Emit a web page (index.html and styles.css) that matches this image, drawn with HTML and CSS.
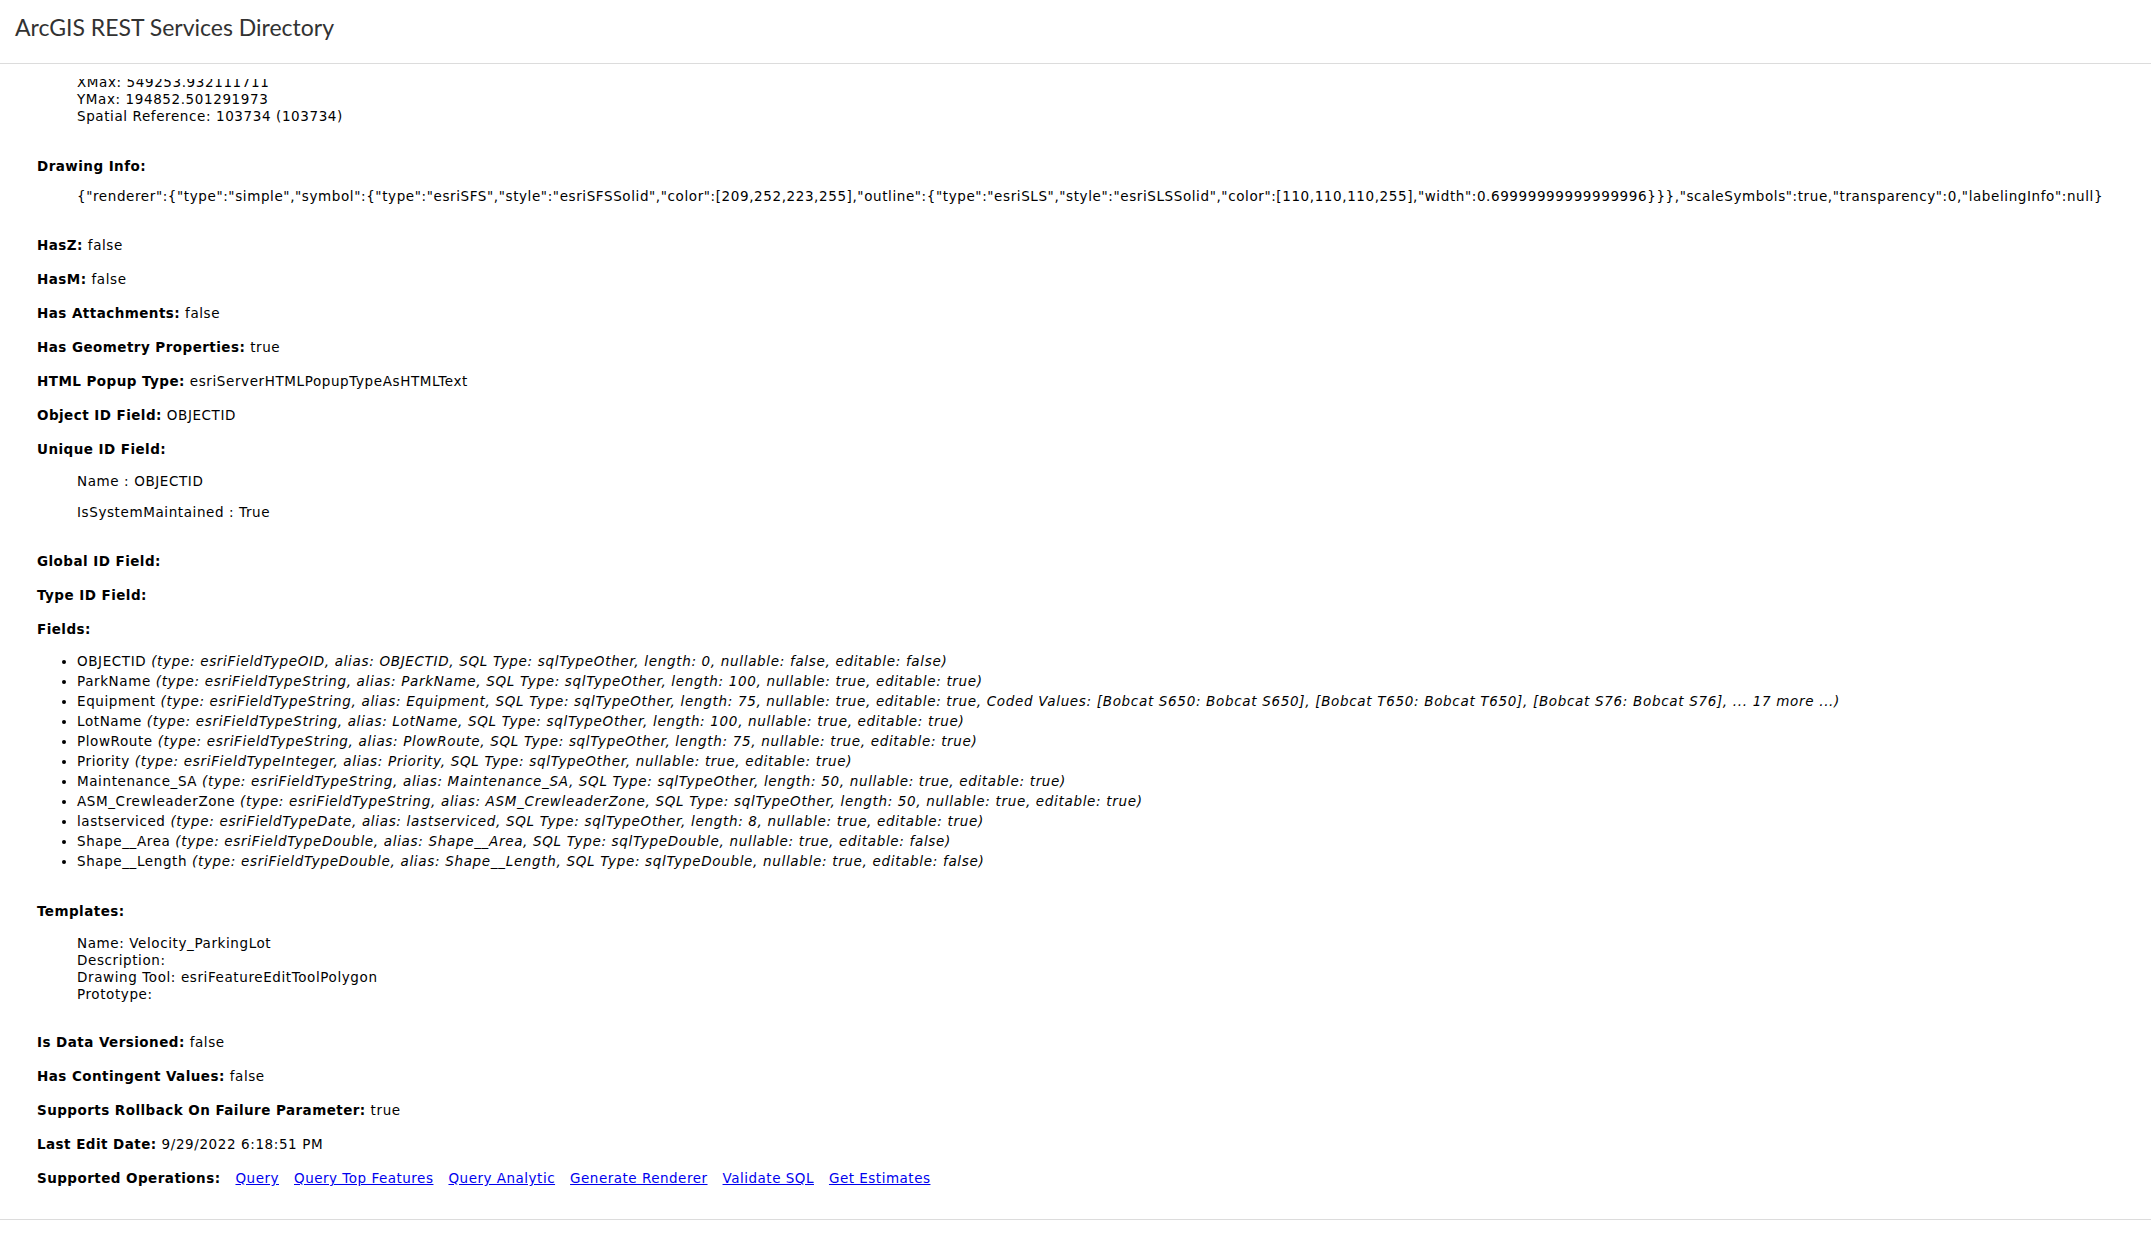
FILE: index.html
```
<!DOCTYPE html>
<html lang="en">
<head>
<meta charset="utf-8">
<title>ArcGIS REST Services Directory</title>
<link rel="stylesheet" href="styles.css">
</head>
<body>
<header class="appbar">
  <h1 class="app-title">ArcGIS REST Services Directory</h1>
</header>
<main class="viewport">
  <div class="content">
    <div class="indent">
      <div>XMax: 549253.932111711</div>
      <div>YMax: 194852.501291973</div>
      <div>Spatial Reference: 103734 (103734)</div>
    </div>

    <div class="row gap-33"><b>Drawing Info:</b></div>
    <div class="indent json gap-13">{"renderer":{"type":"simple","symbol":{"type":"esriSFS","style":"esriSFSSolid","color":[209,252,223,255],"outline":{"type":"esriSLS","style":"esriSLSSolid","color":[110,110,110,255],"width":0.69999999999999996}}},"scaleSymbols":true,"transparency":0,"labelingInfo":null}</div>

    <div class="row gap-32"><b>HasZ:</b> false</div>
    <div class="row gap-17"><b>HasM:</b> false</div>
    <div class="row gap-17"><b>Has Attachments:</b> false</div>
    <div class="row gap-17"><b>Has Geometry Properties:</b> true</div>
    <div class="row gap-17"><b>HTML Popup Type:</b> esriServerHTMLPopupTypeAsHTMLText</div>
    <div class="row gap-17"><b>Object ID Field:</b> OBJECTID</div>
    <div class="row gap-17"><b>Unique ID Field:</b></div>
    <div class="indent gap-15">Name : OBJECTID</div>
    <div class="indent gap-14">IsSystemMaintained : True</div>

    <div class="row gap-32"><b>Global ID Field:</b></div>
    <div class="row gap-17"><b>Type ID Field:</b></div>
    <div class="row gap-17"><b>Fields:</b></div>
    <ul class="fields">
      <li>OBJECTID <i>(type: esriFieldTypeOID, alias: OBJECTID, SQL Type: sqlTypeOther, length: 0, nullable: false, editable: false)</i></li>
      <li>ParkName <i>(type: esriFieldTypeString, alias: ParkName, SQL Type: sqlTypeOther, length: 100, nullable: true, editable: true)</i></li>
      <li>Equipment <i>(type: esriFieldTypeString, alias: Equipment, SQL Type: sqlTypeOther, length: 75, nullable: true, editable: true, Coded Values: [Bobcat S650: Bobcat S650], [Bobcat T650: Bobcat T650], [Bobcat S76: Bobcat S76], ... 17 more ...)</i></li>
      <li>LotName <i>(type: esriFieldTypeString, alias: LotName, SQL Type: sqlTypeOther, length: 100, nullable: true, editable: true)</i></li>
      <li>PlowRoute <i>(type: esriFieldTypeString, alias: PlowRoute, SQL Type: sqlTypeOther, length: 75, nullable: true, editable: true)</i></li>
      <li>Priority <i>(type: esriFieldTypeInteger, alias: Priority, SQL Type: sqlTypeOther, nullable: true, editable: true)</i></li>
      <li>Maintenance_SA <i>(type: esriFieldTypeString, alias: Maintenance_SA, SQL Type: sqlTypeOther, length: 50, nullable: true, editable: true)</i></li>
      <li>ASM_CrewleaderZone <i>(type: esriFieldTypeString, alias: ASM_CrewleaderZone, SQL Type: sqlTypeOther, length: 50, nullable: true, editable: true)</i></li>
      <li>lastserviced <i>(type: esriFieldTypeDate, alias: lastserviced, SQL Type: sqlTypeOther, length: 8, nullable: true, editable: true)</i></li>
      <li>Shape__Area <i>(type: esriFieldTypeDouble, alias: Shape__Area, SQL Type: sqlTypeDouble, nullable: true, editable: false)</i></li>
      <li>Shape__Length <i>(type: esriFieldTypeDouble, alias: Shape__Length, SQL Type: sqlTypeDouble, nullable: true, editable: false)</i></li>
    </ul>

    <div class="row gap-32"><b>Templates:</b></div>
    <div class="indent gap-15">
      <div>Name: Velocity_ParkingLot</div>
      <div>Description: </div>
      <div>Drawing Tool: esriFeatureEditToolPolygon</div>
      <div>Prototype: </div>
    </div>

    <div class="row gap-31"><b>Is Data Versioned:</b> false</div>
    <div class="row gap-17"><b>Has Contingent Values:</b> false</div>
    <div class="row gap-17"><b>Supports Rollback On Failure Parameter:</b> true</div>
    <div class="row gap-17"><b>Last Edit Date:</b> 9/29/2022 6:18:51 PM</div>
    <div class="row ops gap-17">
      <b>Supported Operations:</b>
      <a href="#">Query</a>
      <a href="#">Query Top Features</a>
      <a href="#">Query Analytic</a>
      <a href="#">Generate Renderer</a>
      <a href="#">Validate SQL</a>
      <a href="#">Get Estimates</a>
    </div>
  </div>
  <div class="footer-rule"></div>
</main>
</body>
</html>
```

FILE: styles.css
```
html, body {
  margin: 0;
  padding: 0;
  background: #ffffff;
}

body {
  font-family: "DejaVu Sans", Verdana, sans-serif;
  font-size: 13.5px;
  letter-spacing: 0.6px;
  line-height: 17px;
  color: #000000;
}

b {
  letter-spacing: 0.45px;
}

i {
  letter-spacing: 0.68px;
}

.appbar {
  box-sizing: border-box;
  height: 64px;
  border-bottom: 1px solid #dcdcdc;
  padding: 13px 0 0 15px;
}

.app-title {
  margin: 0;
  font-family: Lato, "Open Sans", sans-serif;
  font-weight: 400;
  font-size: 23px;
  letter-spacing: 0;
  line-height: 29px;
  color: #323232;
}

.viewport {
  margin-top: 15px;
  overflow: hidden;
}

.content {
  margin-top: -5px;
  padding-left: 37px;
}

.indent {
  padding-left: 40px;
}

.json {
  white-space: nowrap;
}

.row {
  white-space: nowrap;
}

.gap-13 { margin-top: 13px; }
.gap-14 { margin-top: 14px; }
.gap-15 { margin-top: 15px; }
.gap-17 { margin-top: 17px; }
.gap-31 { margin-top: 31px; }
.gap-32 { margin-top: 32px; }
.gap-33 { margin-top: 33px; }

.fields {
  margin: 13px 0 0 0;
  padding-left: 40px;
}

.fields li {
  line-height: 20px;
  white-space: nowrap;
}

.ops {
  display: flex;
  align-items: baseline;
  gap: 15px;
}

.ops a {
  color: #0000ee;
  letter-spacing: 0.5px;
  text-decoration: underline;
}

.footer-rule {
  margin-top: 32px;
  border-top: 1px solid #dcdcdc;
  height: 32px;
}
```
